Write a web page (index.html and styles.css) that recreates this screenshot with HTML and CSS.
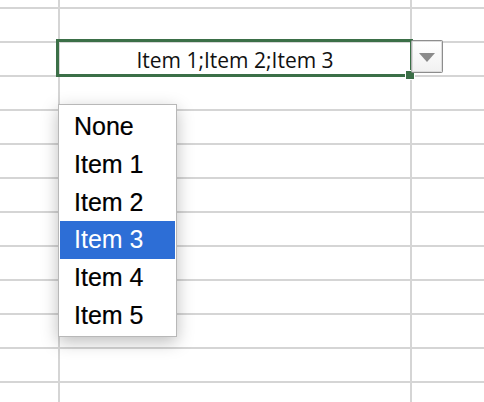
FILE: index.html
```html
<!DOCTYPE html>
<html>
<head>
<meta charset="utf-8">
<link rel="stylesheet" href="styles.css">
</head>
<body>
<div class="sheet">
  <div class="c a"></div><div class="c b"></div><div class="c d"></div>
  <div class="c a"></div><div class="c b"></div><div class="c d"></div>
  <div class="c a"></div>
  <div class="c b selected-cell">
    <span class="cell-text">Item 1;Item 2;Item 3</span>
    <div class="selection"></div>
    <div class="fill-handle"></div>
    <div class="dd-button"><span class="dd-arrow"></span></div>
  </div>
  <div class="c d"></div>
  <div class="c a"></div><div class="c b"></div><div class="c d"></div>
  <div class="c a"></div><div class="c b"></div><div class="c d"></div>
  <div class="c a"></div><div class="c b"></div><div class="c d"></div>
  <div class="c a"></div><div class="c b"></div><div class="c d"></div>
  <div class="c a"></div><div class="c b"></div><div class="c d"></div>
  <div class="c a"></div><div class="c b"></div><div class="c d"></div>
  <div class="c a"></div><div class="c b"></div><div class="c d"></div>
  <div class="c a"></div><div class="c b"></div><div class="c d"></div>
  <div class="c a"></div><div class="c b"></div><div class="c d"></div>
  <div class="c a last"></div><div class="c b last"></div><div class="c d last"></div>

  <ul class="list">
    <li class="opt">None</li>
    <li class="opt">Item 1</li>
    <li class="opt">Item 2</li>
    <li class="opt active">Item 3</li>
    <li class="opt">Item 4</li>
    <li class="opt">Item 5</li>
  </ul>
</div>
</body>
</html>
```

FILE: styles.css
```css
html, body {
  margin: 0;
  padding: 0;
  background: #ffffff;
}

body {
  width: 484px;
  height: 402px;
  overflow: hidden;
}

.sheet {
  position: relative;
  display: grid;
  grid-template-columns: 60px 352px 1fr;
  grid-template-rows: 9px repeat(11, 34px) 1fr;
  width: 484px;
  height: 402px;
}

.c {
  box-sizing: border-box;
  border-bottom: 2px solid #d5d5d5;
}

.c.a, .c.b {
  border-right: 2px solid #d5d5d5;
}

.c.last {
  border-bottom: none;
}

.selected-cell {
  position: relative;
  display: flex;
  align-items: center;
  justify-content: center;
}

.cell-text {
  font-family: "Open Sans", "Liberation Sans", sans-serif;
  font-size: 21px;
  color: #111;
  line-height: 32px;
  padding-top: 1px;
}

.selection {
  position: absolute;
  left: -4px;
  top: -4px;
  right: -3px;
  bottom: -2px;
  border: 3px solid #3b6f47;
  pointer-events: none;
}

.fill-handle {
  position: absolute;
  left: 345px;
  top: 27px;
  width: 8px;
  height: 8px;
  background: #3b6f47;
  border: 1px solid #ffffff;
}

.dd-button {
  position: absolute;
  left: 351px;
  top: -3px;
  width: 32px;
  height: 33px;
  box-sizing: border-box;
  border: 1px solid #8d8d8d;
  border-left-color: #b0b0b0;
  border-radius: 2px;
  background: linear-gradient(#ffffff, #f1f1f1);
  box-shadow: inset 0 0 0 1px #dcdcdc;
  display: flex;
  align-items: center;
  justify-content: center;
}

.dd-arrow {
  width: 0;
  height: 0;
  border-left: 8px solid transparent;
  border-right: 8px solid transparent;
  border-top: 9px solid #8a8a8a;
  margin-top: 1px;
}

.list {
  position: absolute;
  left: 58px;
  top: 104px;
  width: 119px;
  margin: 0;
  padding: 3px 1px 1px 1px;
  box-sizing: border-box;
  list-style: none;
  background: #ffffff;
  border: 1px solid #b8b8b8;
  box-shadow: 0 5px 16px rgba(0, 0, 0, 0.26);
}

.opt {
  height: 37.8px;
  line-height: 37.8px;
  padding-left: 14px;
  font-family: "Liberation Sans", Arial, sans-serif;
  font-size: 25px;
  color: #000;
  white-space: nowrap;
  -webkit-text-stroke: 0.2px #000;
}

.opt.active {
  background: #2d6ed6;
  color: #ffffff;
  -webkit-text-stroke: 0;
}
```
